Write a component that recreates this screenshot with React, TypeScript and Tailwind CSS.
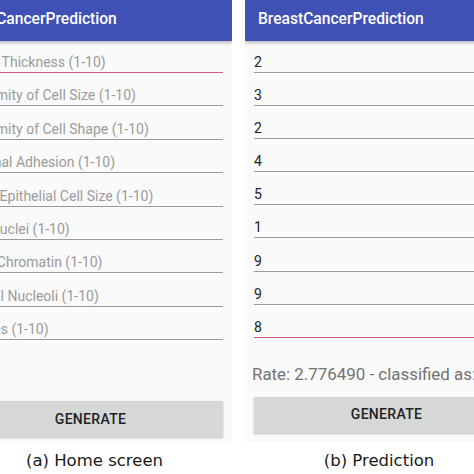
const hints = [
  'Clump Thickness (1-10)',
  'Uniformity of Cell Size (1-10)',
  'Uniformity of Cell Shape (1-10)',
  'Marginal Adhesion (1-10)',
  'Single Epithelial Cell Size (1-10)',
  'Bare Nuclei (1-10)',
  'Bland Chromatin (1-10)',
  'Normal Nucleoli (1-10)',
  'Mitoses (1-10)',
]

const values = ['2', '3', '2', '4', '5', '1', '9', '9', '8']

const AppBar = ({ shift }: { shift?: boolean }) => (
  <div className="h-[41px] bg-[#3f51b5] flex items-center pl-[13px] shadow-[0_2px_3px_rgba(0,0,0,0.25)] relative z-10">
    <span className={`text-white text-[15.6px] font-medium -mt-[1px] whitespace-nowrap ${shift ? '-ml-[11px]' : ''}`}>
      BreastCancerPrediction
    </span>
  </div>
)

const Field = ({ text, hint, focused }: { text: string; hint?: boolean; focused?: boolean }) => (
  <div
    className={`h-[30px] mx-[9px] flex items-end whitespace-nowrap ${
      focused ? 'border-b-[1.5px] border-[#dc5a86]' : 'border-b-[1.3px] border-[#9a9a9a]'
    }`}
  >
    <span className={`text-[14px] leading-[20px] ${hint ? 'text-[#9b9b9b]' : 'text-[#222]'}`}>{text}</span>
  </div>
)

const GenerateButton = () => (
  <div className="mx-[9px] h-[36px] bg-[#d6d7d7] shadow-[0_1px_2px_rgba(0,0,0,0.25)] flex items-center justify-center">
    <span className="text-[14px] font-medium text-[#222] tracking-[0.3px]">GENERATE</span>
  </div>
)

export default function App() {
  return (
    <div className="w-[474px] h-[474px] bg-white overflow-hidden" style={{ fontFamily: 'Roboto, "Noto Sans", sans-serif' }}>
      <div className="flex">
        {/* home screen, cut off at the left */}
        <div className="w-[232px] overflow-hidden shrink-0">
          <div className="w-[283px] ml-[-51px] h-[443px] bg-[#fafafa]">
            <AppBar shift />
            <div className="pt-[2px] flex flex-col gap-[3.4px]">
              {hints.map((h, i) => (
                <Field key={h} text={h} hint focused={i === 0} />
              ))}
            </div>
            <div className="mt-[61px]">
              <GenerateButton />
            </div>
          </div>
        </div>

        {/* prediction screen, cut off at the right */}
        <div className="ml-[13px] flex-1 overflow-hidden">
          <div className="w-[283px] h-[442px] bg-[#fafafa]">
            <AppBar />
            <div className="pt-[2px] flex flex-col gap-[3.1px]">
              {values.map((v, i) => (
                <Field key={i} text={v} focused={i === values.length - 1} />
              ))}
            </div>
            <div className="mt-[25px] pl-[7px] whitespace-nowrap text-[16.9px] text-[#737373] leading-[22px]">
              Rate: 2.776490 - classified as: benign
            </div>
            <div className="mt-[12px]">
              <GenerateButton />
            </div>
          </div>
        </div>
      </div>

      <div className="flex mt-[6px] text-[16.5px] text-[#1a1a1a]" style={{ fontFamily: '"DejaVu Sans", sans-serif' }}>
        <div className="w-[189px] shrink-0 text-center">(a) Home screen</div>
        <div className="ml-[56px] w-[268px] shrink-0 text-center">(b) Prediction</div>
      </div>
    </div>
  )
}
